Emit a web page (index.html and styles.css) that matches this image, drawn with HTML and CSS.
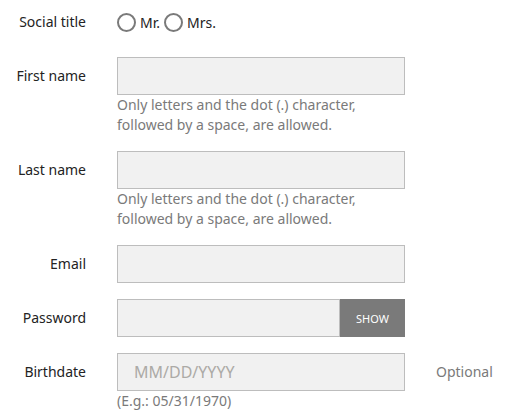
FILE: index.html
```html
<!DOCTYPE html>
<html lang="en">
<head>
    <meta charset="UTF-8">
    <title>Create an account</title>
    <link rel="stylesheet" href="styles.css">
</head>
<body>
    <form class="register-form">
        <div class="form-row social-row">
            <label class="form-label">Social title</label>
            <div class="form-field radios">
                <label class="radio"><span class="radio-circle"></span>Mr.</label>
                <label class="radio"><span class="radio-circle"></span>Mrs.</label>
            </div>
        </div>

        <div class="form-row">
            <label class="form-label">First name</label>
            <div class="form-field">
                <input class="form-input" type="text">
                <div class="form-help">Only letters and the dot (.) character, followed by a space, are allowed.</div>
            </div>
        </div>

        <div class="form-row">
            <label class="form-label">Last name</label>
            <div class="form-field">
                <input class="form-input" type="text">
                <div class="form-help">Only letters and the dot (.) character, followed by a space, are allowed.</div>
            </div>
        </div>

        <div class="form-row">
            <label class="form-label">Email</label>
            <div class="form-field">
                <input class="form-input" type="email">
            </div>
        </div>

        <div class="form-row">
            <label class="form-label">Password</label>
            <div class="form-field input-group">
                <input class="form-input" type="password">
                <button class="show-button" type="button">Show</button>
            </div>
        </div>

        <div class="form-row">
            <label class="form-label">Birthdate</label>
            <div class="form-field">
                <input class="form-input date-input" type="text" placeholder="MM/DD/YYYY">
                <div class="form-help">(E.g.: 05/31/1970)</div>
            </div>
            <div class="form-comment">Optional</div>
        </div>
    </form>
</body>
</html>
```

FILE: styles.css
```css
body {
    margin: 0;
    padding-top: 3px;
    font-family: "Noto Sans", sans-serif;
    font-size: 14px;
    color: #232323;
    background: #fff;
}
.form-row {
    display: grid;
    grid-template-columns: 86px 288px auto;
    column-gap: 31px;
    margin-bottom: 16px;
}
.form-label {
    text-align: right;
    height: 38px;
    line-height: 38px;
}
.radios {
    display: flex;
    align-items: center;
    height: 38px;
}
.radio {
    display: flex;
    align-items: center;
    margin-right: 4px;
}
.radio-circle {
    display: inline-block;
    width: 15px;
    height: 15px;
    border: 2px solid #7a7a7a;
    border-radius: 50%;
    margin-right: 4px;
}
.form-input {
    display: block;
    box-sizing: border-box;
    width: 100%;
    height: 38px;
    margin: 0;
    padding: 0 16px;
    border: 1px solid #bdbdbd;
    background: #f1f1f1;
    font-family: inherit;
    font-size: 14px;
    color: #232323;
}
.form-input::placeholder {
    color: #acaaa6;
}
.date-input {
    font-size: 16px;
}
.form-help {
    color: #7a7a7a;
    font-size: 14px;
    line-height: 20px;
}
.input-group {
    display: flex;
}
.input-group .form-input {
    flex: 1;
}
.show-button {
    width: 65px;
    height: 38px;
    border: none;
    background: #7a7a7a;
    color: #fff;
    font-family: inherit;
    font-size: 11px;
    text-transform: uppercase;
}
.form-comment {
    color: #7a7a7a;
    height: 38px;
    line-height: 38px;
}
```
